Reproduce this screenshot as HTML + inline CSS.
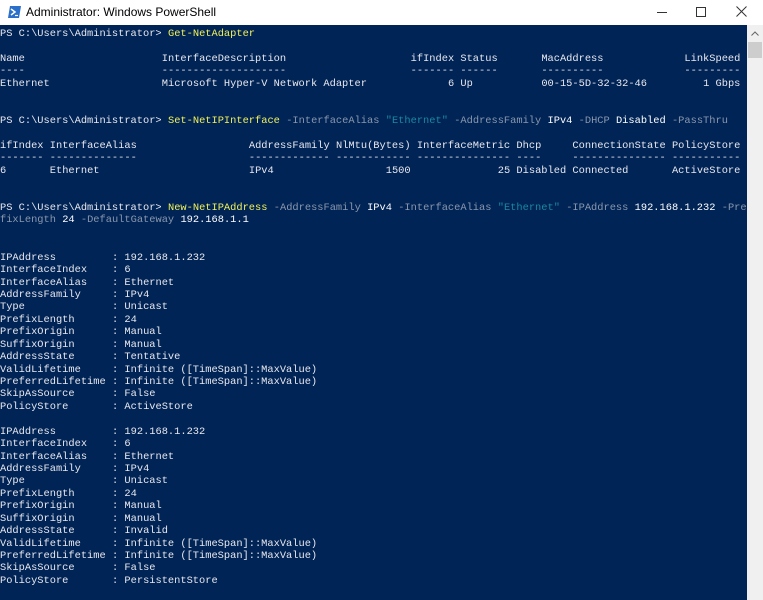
<!DOCTYPE html>
<html><head><meta charset="utf-8"><style>
*{margin:0;padding:0;box-sizing:border-box}
body{width:763px;height:600px;overflow:hidden;background:#fff;position:relative;font-family:"Liberation Sans",sans-serif}
#tb{position:absolute;left:0;top:0;width:763px;height:25px;background:#fff}
#tb .t{position:absolute;left:26px;top:5px;font-size:12px;color:#000}
#con{position:absolute;left:0;top:25px;width:747px;height:575px;background:#012456;overflow:hidden}
#sb{position:absolute;left:747px;top:25px;width:16px;height:575px;background:#f0f0f0}
.r{position:absolute;left:0;height:12.43px;width:747px;font-family:"Liberation Mono",monospace;font-size:10.37px;line-height:12.43px;color:#e8e8ee;white-space:pre}
.r span{position:absolute;top:0}
.y{color:#f2f25a}.g{color:#8a97ad}.c{color:#1a8aa0}.w{color:#fff}
</style></head><body>
<div id="tb">
<svg style="position:absolute;left:8px;top:6px" width="13" height="12" viewBox="0 0 13 12"><polygon points="2,0 13,0 11,12 0,12" fill="#2a6fc9"/><polyline points="3,3 7,6 3,9" fill="none" stroke="#fff" stroke-width="1.5"/><line x1="7" y1="9.5" x2="10" y2="9.5" stroke="#fff" stroke-width="1.2"/></svg>
<div class="t">Administrator: Windows PowerShell</div>
<div style="position:absolute;left:657px;top:12px;width:10px;height:1px;background:#333"></div>
<div style="position:absolute;left:696px;top:7px;width:10px;height:10px;border:1px solid #333"></div>
<svg style="position:absolute;left:736px;top:6px" width="11" height="11"><path d="M0.5 0.5L10.5 10.5M10.5 0.5L0.5 10.5" stroke="#333" stroke-width="1"/></svg>
</div>
<div id="sb">
<svg style="position:absolute;left:4px;top:6px" width="8" height="5"><path d="M0.5 4.5L4 1L7.5 4.5" fill="none" stroke="#666"/></svg>
<div style="position:absolute;left:1px;top:17px;width:14px;height:16px;background:#cdcdcd"></div>
</div>
<div id="con"></div>
<script>
var rows=[
[0,[[0,"PS C:\\Users\\Administrator> "],[27,"Get-NetAdapter","y"]]],
[2,[[0,"Name"],[26,"InterfaceDescription"],[66,"ifIndex Status"],[87,"MacAddress"],[110,"LinkSpeed"]]],
[3,[[0,"----"],[26,"--------------------"],[66,"------- ------"],[87,"----------"],[110,"---------"]]],
[4,[[0,"Ethernet"],[26,"Microsoft Hyper-V Network Adapter"],[72,"6"],[74,"Up"],[87,"00-15-5D-32-32-46"],[113,"1 Gbps"]]],
[7,[[0,"PS C:\\Users\\Administrator> "],[27,"Set-NetIPInterface","y"],[46,"-InterfaceAlias","g"],[62,"\"Ethernet\"","c"],[73,"-AddressFamily","g"],[88,"IPv4","w"],[93,"-DHCP","g"],[99,"Disabled","w"],[108,"-PassThru","g"]]],
[9,[[0,"ifIndex"],[8,"InterfaceAlias"],[40,"AddressFamily"],[54,"NlMtu(Bytes)"],[67,"InterfaceMetric"],[83,"Dhcp"],[92,"ConnectionState"],[108,"PolicyStore"]]],
[10,[[0,"-------"],[8,"--------------"],[40,"-------------"],[54,"------------"],[67,"---------------"],[83,"----"],[92,"---------------"],[108,"-----------"]]],
[11,[[0,"6"],[8,"Ethernet"],[40,"IPv4"],[62,"1500"],[80,"25"],[83,"Disabled"],[92,"Connected"],[108,"ActiveStore"]]],
[14,[[0,"PS C:\\Users\\Administrator> "],[27,"New-NetIPAddress","y"],[44,"-AddressFamily","g"],[59,"IPv4","w"],[64,"-InterfaceAlias","g"],[80,"\"Ethernet\"","c"],[91,"-IPAddress","g"],[102,"192.168.1.232","w"],[116,"-Pre","g"]]],
[15,[[0,"fixLength","g"],[10,"24","w"],[13,"-DefaultGateway","g"],[29,"192.168.1.1","w"]]]
];
function blk(s,st){var f=[["IPAddress","192.168.1.232"],["InterfaceIndex","6"],["InterfaceAlias","Ethernet"],["AddressFamily","IPv4"],["Type","Unicast"],["PrefixLength","24"],["PrefixOrigin","Manual"],["SuffixOrigin","Manual"],["AddressState",st[0]],["ValidLifetime","Infinite ([TimeSpan]::MaxValue)"],["PreferredLifetime","Infinite ([TimeSpan]::MaxValue)"],["SkipAsSource","False"],["PolicyStore",st[1]]];
f.forEach(function(x,i){rows.push([s+i,[[0,x[0]],[18,": "+x[1]]]])});}
blk(18,["Tentative","ActiveStore"]);blk(32,["Invalid","PersistentStore"]);
var con=document.getElementById("con"),h="";
rows.forEach(function(r){h+='<div class="r" style="top:'+(3+r[0]*12.43)+'px">';r[1].forEach(function(s){h+='<span class="'+(s[2]||"")+'" style="left:'+(s[0]*6.222)+'px">'+s[1].replace(/&/g,"&amp;").replace(/</g,"&lt;").replace(/>/g,"&gt;")+'</span>'});h+='</div>'});
con.innerHTML=h;
</script>
</body></html>
